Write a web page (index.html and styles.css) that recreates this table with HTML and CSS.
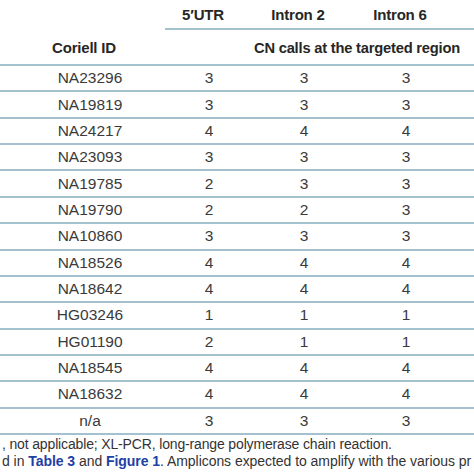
FILE: index.html
```html
<!DOCTYPE html>
<html>
<head>
<meta charset="utf-8">
<link rel="stylesheet" href="styles.css">
</head>
<body>
<div class="table">
  <div class="head1">
    <div></div>
    <div class="hcell">5′UTR</div>
    <div class="hcell">Intron 2</div>
    <div class="hcell">Intron 6</div>
  </div>
  <div class="head2">
    <div class="hcell">Coriell ID</div>
    <div class="hcell span">CN calls at the targeted region</div>
  </div>
  <div class="row"><div>NA23296</div><div>3</div><div>3</div><div>3</div></div>
  <div class="row"><div>NA19819</div><div>3</div><div>3</div><div>3</div></div>
  <div class="row"><div>NA24217</div><div>4</div><div>4</div><div>4</div></div>
  <div class="row"><div>NA23093</div><div>3</div><div>3</div><div>3</div></div>
  <div class="row"><div>NA19785</div><div>2</div><div>3</div><div>3</div></div>
  <div class="row"><div>NA19790</div><div>2</div><div>2</div><div>3</div></div>
  <div class="row"><div>NA10860</div><div>3</div><div>3</div><div>3</div></div>
  <div class="row"><div>NA18526</div><div>4</div><div>4</div><div>4</div></div>
  <div class="row"><div>NA18642</div><div>4</div><div>4</div><div>4</div></div>
  <div class="row"><div>HG03246</div><div>1</div><div>1</div><div>1</div></div>
  <div class="row"><div>HG01190</div><div>2</div><div>1</div><div>1</div></div>
  <div class="row"><div>NA18545</div><div>4</div><div>4</div><div>4</div></div>
  <div class="row"><div>NA18632</div><div>4</div><div>4</div><div>4</div></div>
  <div class="row"><div>n/a</div><div>3</div><div>3</div><div>3</div></div>
</div>
<div class="notes">
  <p class="l1">, not applicable; XL-PCR, long-range polymerase chain reaction.</p>
  <p class="l2">d in <a class="ref">Table 3</a> and <a class="ref">Figure 1</a>. Amplicons expected to amplify with the various pr</p>
</div>
</body>
</html>
```

FILE: styles.css
```css
html, body {
  margin: 0;
  padding: 0;
  background: #ffffff;
}
body {
  width: 474px;
  height: 474px;
  overflow: hidden;
  font-family: "Liberation Sans", Arial, sans-serif;
  color: #3a3a3a;
}
.table {
  display: flex;
  flex-direction: column;
}
.head1 {
  margin-left: 165px;
  height: 28px;
  border-bottom: 2px solid #a3c1ce;
  display: grid;
  grid-template-columns: 15px 58px 132px 72px 1fr;
  align-items: center;
}
.head2 {
  height: 33px;
  border-bottom: 2px solid #a3c1ce;
  display: grid;
  grid-template-columns: 180px 1fr;
  align-items: center;
  padding-top: 1px;
  box-sizing: content-box;
}
.hcell {
  font-weight: bold;
  font-size: 15px;
  color: #262626;
  text-align: center;
  padding-right: 12px;
  white-space: nowrap;
  letter-spacing: -0.2px;
}
.hcell.span {
  padding-right: 0;
  padding-left: 60px;
  font-size: 14.7px;
}
.row {
  height: 24.36px;
  border-bottom: 2px solid #a3c1ce;
  display: grid;
  grid-template-columns: 180px 58px 132px 72px 1fr;
  align-items: center;
  font-size: 15.5px;
}
.row > div {
  text-align: center;
  white-space: nowrap;
}
.notes {
  padding-top: 1px;
  padding-left: 2px;
  font-size: 14px;
  line-height: 16.5px;
  color: #333333;
  white-space: nowrap;
}
.notes p {
  margin: 0;
}
.notes .l1 {
  letter-spacing: -0.15px;
}
.notes .l2 {
  letter-spacing: -0.05px;
}
.ref {
  color: #2140a6;
  font-weight: bold;
}
```
